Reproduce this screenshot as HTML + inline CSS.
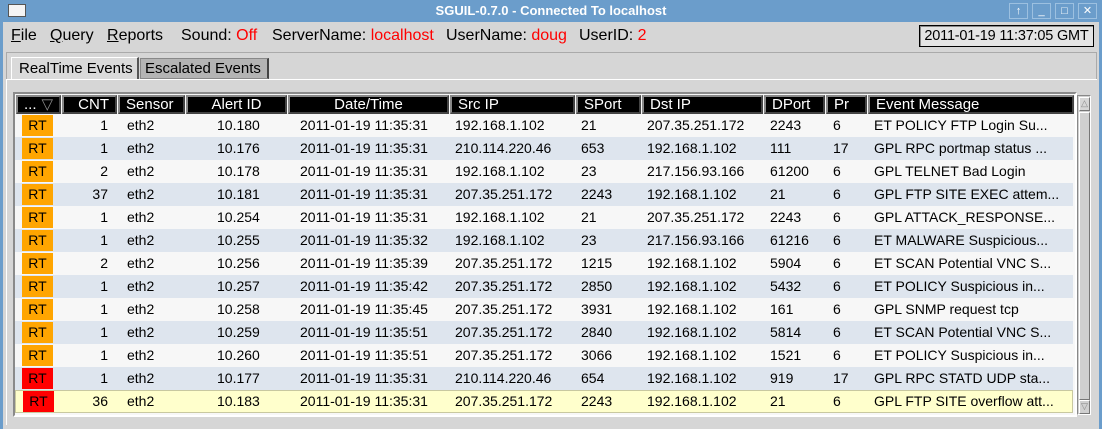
<!DOCTYPE html>
<html><head><meta charset="utf-8"><style>
*{margin:0;padding:0;box-sizing:border-box}
body{width:1102px;height:429px;background:#d6d6d6;font-family:"Liberation Sans",sans-serif;font-size:14px;color:#000;position:relative;overflow:hidden}
.a{position:absolute;white-space:nowrap}
#title{left:0;top:0;width:1102px;height:22px;background:#6b9dcb;color:#fff;font-weight:bold;font-size:13px;text-align:center;line-height:22px}
.wb{position:absolute;top:3px;width:19px;height:16px;border:1px solid #9cc0e0;background:#6b9dcb;color:#fff;font-size:11px;text-align:center;line-height:14px}
.red{color:#f00}
u{text-decoration:underline}
.m{font-size:16px;top:26px;line-height:20px}
#tbl{left:13px;top:92px;width:1064px;height:325px;background:#f7f7f7;border:2px solid;border-color:#8a8a8a #fff #fff #8a8a8a}
.hd{position:absolute;top:95px;height:19px;background:#000;color:#fff;border:2px solid;border-color:#888 #444 #444 #888;line-height:15px;padding:0 6px;font-size:15px}
.row{position:absolute;left:15px;width:1058px;height:23px}
.c{position:absolute;top:0;line-height:23px;white-space:nowrap}
.rt{position:absolute;left:7px;top:1px;width:31px;height:21px;text-align:center;line-height:21px}
</style></head><body>
<div class="a" id="title">SGUIL-0.7.0 - Connected To localhost</div>
<div class="a" style="left:8px;top:4px;width:18px;height:13px;background:#f4f4f4;border:1px solid #555"></div>
<div class="wb" style="left:1009px">↑</div><div class="wb" style="left:1032px">_</div><div class="wb" style="left:1055px">□</div><div class="wb" style="left:1078px">✕</div>
<div class="a" style="left:0;top:22px;width:3px;height:407px;background:#6b9dcb"></div>
<div class="a" style="left:1099px;top:22px;width:3px;height:407px;background:#6b9dcb"></div>
<div class="a m" style="left:11px"><u>F</u>ile</div>
<div class="a m" style="left:50px"><u>Q</u>uery</div>
<div class="a m" style="left:107px"><u>R</u>eports</div>
<div class="a m" style="left:181px">Sound: <span class="red">Off</span></div>
<div class="a m" style="left:272px">ServerName: <span class="red">localhost</span></div>
<div class="a m" style="left:446px">UserName: <span class="red">doug</span></div>
<div class="a m" style="left:579px">UserID: <span class="red">2</span></div>
<div class="a" style="left:919px;top:25px;width:175px;height:22px;border:1px solid #000;background:#e4e4e4;line-height:20px;text-align:center;box-shadow:inset 1px 1px 0 #888;font-size:14.5px;letter-spacing:-0.2px">2011-01-19 11:37:05 GMT</div>
<div class="a" style="left:6px;top:52px;width:1091px;height:28px;border:1px solid #aaa;border-bottom:none"></div>
<div class="a" style="left:11px;top:57px;width:128px;height:23px;background:#dadada;border:1px solid #fff;border-right:2px solid #555;border-bottom:none;padding-left:7px;line-height:21px;font-size:15px">RealTime Events</div>
<div class="a" style="left:140px;top:58px;width:129px;height:21px;background:#b4b4b4;border:1px solid #888;border-right:2px solid #444;padding-left:4px;line-height:19px;font-size:15px">Escalated Events</div>
<div class="a" style="left:6px;top:79px;width:1091px;height:1px;background:#fff"></div>
<div class="a" style="left:6px;top:80px;width:1px;height:345px;background:#fff"></div>
<div class="a" id="tbl"></div>
<div class="hd" style="left:16px;width:45px">... <span style="float:right;color:#888">▽</span></div>
<div class="hd" style="left:62px;width:55px;text-align:right">CNT</div>
<div class="hd" style="left:118px;width:67px">Sensor</div>
<div class="hd" style="left:186px;width:101px;text-align:center">Alert ID</div>
<div class="hd" style="left:288px;width:161px;text-align:center">Date/Time</div>
<div class="hd" style="left:450px;width:125px">Src IP</div>
<div class="hd" style="left:576px;width:65px">SPort</div>
<div class="hd" style="left:642px;width:121px">Dst IP</div>
<div class="hd" style="left:764px;width:61px">DPort</div>
<div class="hd" style="left:826px;width:41px">Pr</div>
<div class="hd" style="left:868px;width:206px">Event Message</div>
<div class="a" style="left:1077px;top:95px;width:14px;height:320px;background:#d0d0d0;border:1px solid;border-color:#888 #fff #fff #888"></div>
<div class="a" style="left:1079px;top:97px;width:11px;height:14px;background:#d6d6d6;border:1px solid;border-color:#fff #777 #777 #fff;font-size:9px;line-height:11px;text-align:center;color:#888">△</div>
<div class="a" style="left:1079px;top:112px;width:11px;height:288px;border:1px solid;border-color:#fff #777 #777 #fff"></div>
<div class="a" style="left:1079px;top:400px;width:11px;height:14px;border:1px solid;border-color:#fff #777 #777 #fff;font-size:9px;line-height:11px;text-align:center;color:#888">▽</div>

<div class="row" style="top:114px;background:#f7f7f7"><div class="rt" style="background:#ffa500">RT</div><div class="c" style="right:965px">1</div><div class="c" style="left:112px">eth2</div><div class="c" style="left:202px">10.180</div><div class="c" style="left:285px">2011-01-19 11:35:31</div><div class="c" style="left:440px">192.168.1.102</div><div class="c" style="left:566px">21</div><div class="c" style="left:632px">207.35.251.172</div><div class="c" style="left:755px">2243</div><div class="c" style="left:818px">6</div><div class="c" style="left:859px">ET POLICY FTP Login Su...</div></div>
<div class="row" style="top:137px;background:#dee5ee"><div class="rt" style="background:#ffa500">RT</div><div class="c" style="right:965px">1</div><div class="c" style="left:112px">eth2</div><div class="c" style="left:202px">10.176</div><div class="c" style="left:285px">2011-01-19 11:35:31</div><div class="c" style="left:440px">210.114.220.46</div><div class="c" style="left:566px">653</div><div class="c" style="left:632px">192.168.1.102</div><div class="c" style="left:755px">111</div><div class="c" style="left:818px">17</div><div class="c" style="left:859px">GPL RPC portmap status ...</div></div>
<div class="row" style="top:160px;background:#f7f7f7"><div class="rt" style="background:#ffa500">RT</div><div class="c" style="right:965px">2</div><div class="c" style="left:112px">eth2</div><div class="c" style="left:202px">10.178</div><div class="c" style="left:285px">2011-01-19 11:35:31</div><div class="c" style="left:440px">192.168.1.102</div><div class="c" style="left:566px">23</div><div class="c" style="left:632px">217.156.93.166</div><div class="c" style="left:755px">61200</div><div class="c" style="left:818px">6</div><div class="c" style="left:859px">GPL TELNET Bad Login</div></div>
<div class="row" style="top:183px;background:#dee5ee"><div class="rt" style="background:#ffa500">RT</div><div class="c" style="right:965px">37</div><div class="c" style="left:112px">eth2</div><div class="c" style="left:202px">10.181</div><div class="c" style="left:285px">2011-01-19 11:35:31</div><div class="c" style="left:440px">207.35.251.172</div><div class="c" style="left:566px">2243</div><div class="c" style="left:632px">192.168.1.102</div><div class="c" style="left:755px">21</div><div class="c" style="left:818px">6</div><div class="c" style="left:859px">GPL FTP SITE EXEC attem...</div></div>
<div class="row" style="top:206px;background:#f7f7f7"><div class="rt" style="background:#ffa500">RT</div><div class="c" style="right:965px">1</div><div class="c" style="left:112px">eth2</div><div class="c" style="left:202px">10.254</div><div class="c" style="left:285px">2011-01-19 11:35:31</div><div class="c" style="left:440px">192.168.1.102</div><div class="c" style="left:566px">21</div><div class="c" style="left:632px">207.35.251.172</div><div class="c" style="left:755px">2243</div><div class="c" style="left:818px">6</div><div class="c" style="left:859px">GPL ATTACK_RESPONSE...</div></div>
<div class="row" style="top:229px;background:#dee5ee"><div class="rt" style="background:#ffa500">RT</div><div class="c" style="right:965px">1</div><div class="c" style="left:112px">eth2</div><div class="c" style="left:202px">10.255</div><div class="c" style="left:285px">2011-01-19 11:35:32</div><div class="c" style="left:440px">192.168.1.102</div><div class="c" style="left:566px">23</div><div class="c" style="left:632px">217.156.93.166</div><div class="c" style="left:755px">61216</div><div class="c" style="left:818px">6</div><div class="c" style="left:859px">ET MALWARE Suspicious...</div></div>
<div class="row" style="top:252px;background:#f7f7f7"><div class="rt" style="background:#ffa500">RT</div><div class="c" style="right:965px">2</div><div class="c" style="left:112px">eth2</div><div class="c" style="left:202px">10.256</div><div class="c" style="left:285px">2011-01-19 11:35:39</div><div class="c" style="left:440px">207.35.251.172</div><div class="c" style="left:566px">1215</div><div class="c" style="left:632px">192.168.1.102</div><div class="c" style="left:755px">5904</div><div class="c" style="left:818px">6</div><div class="c" style="left:859px">ET SCAN Potential VNC S...</div></div>
<div class="row" style="top:275px;background:#dee5ee"><div class="rt" style="background:#ffa500">RT</div><div class="c" style="right:965px">1</div><div class="c" style="left:112px">eth2</div><div class="c" style="left:202px">10.257</div><div class="c" style="left:285px">2011-01-19 11:35:42</div><div class="c" style="left:440px">207.35.251.172</div><div class="c" style="left:566px">2850</div><div class="c" style="left:632px">192.168.1.102</div><div class="c" style="left:755px">5432</div><div class="c" style="left:818px">6</div><div class="c" style="left:859px">ET POLICY Suspicious in...</div></div>
<div class="row" style="top:298px;background:#f7f7f7"><div class="rt" style="background:#ffa500">RT</div><div class="c" style="right:965px">1</div><div class="c" style="left:112px">eth2</div><div class="c" style="left:202px">10.258</div><div class="c" style="left:285px">2011-01-19 11:35:45</div><div class="c" style="left:440px">207.35.251.172</div><div class="c" style="left:566px">3931</div><div class="c" style="left:632px">192.168.1.102</div><div class="c" style="left:755px">161</div><div class="c" style="left:818px">6</div><div class="c" style="left:859px">GPL SNMP request tcp</div></div>
<div class="row" style="top:321px;background:#dee5ee"><div class="rt" style="background:#ffa500">RT</div><div class="c" style="right:965px">1</div><div class="c" style="left:112px">eth2</div><div class="c" style="left:202px">10.259</div><div class="c" style="left:285px">2011-01-19 11:35:51</div><div class="c" style="left:440px">207.35.251.172</div><div class="c" style="left:566px">2840</div><div class="c" style="left:632px">192.168.1.102</div><div class="c" style="left:755px">5814</div><div class="c" style="left:818px">6</div><div class="c" style="left:859px">ET SCAN Potential VNC S...</div></div>
<div class="row" style="top:344px;background:#f7f7f7"><div class="rt" style="background:#ffa500">RT</div><div class="c" style="right:965px">1</div><div class="c" style="left:112px">eth2</div><div class="c" style="left:202px">10.260</div><div class="c" style="left:285px">2011-01-19 11:35:51</div><div class="c" style="left:440px">207.35.251.172</div><div class="c" style="left:566px">3066</div><div class="c" style="left:632px">192.168.1.102</div><div class="c" style="left:755px">1521</div><div class="c" style="left:818px">6</div><div class="c" style="left:859px">ET POLICY Suspicious in...</div></div>
<div class="row" style="top:367px;background:#dee5ee"><div class="rt" style="background:#ff0000">RT</div><div class="c" style="right:965px">1</div><div class="c" style="left:112px">eth2</div><div class="c" style="left:202px">10.177</div><div class="c" style="left:285px">2011-01-19 11:35:31</div><div class="c" style="left:440px">210.114.220.46</div><div class="c" style="left:566px">654</div><div class="c" style="left:632px">192.168.1.102</div><div class="c" style="left:755px">919</div><div class="c" style="left:818px">17</div><div class="c" style="left:859px">GPL RPC STATD UDP sta...</div></div>
<div class="row" style="top:390px;background:#ffffcc;border:1px solid #c8c8a0"><div class="rt" style="background:#ff0000;top:0">RT</div><div class="c" style="right:964px;line-height:21px">36</div><div class="c" style="left:111px;line-height:21px">eth2</div><div class="c" style="left:201px;line-height:21px">10.183</div><div class="c" style="left:284px;line-height:21px">2011-01-19 11:35:31</div><div class="c" style="left:439px;line-height:21px">207.35.251.172</div><div class="c" style="left:565px;line-height:21px">2243</div><div class="c" style="left:631px;line-height:21px">192.168.1.102</div><div class="c" style="left:754px;line-height:21px">21</div><div class="c" style="left:817px;line-height:21px">6</div><div class="c" style="left:858px;line-height:21px">GPL FTP SITE overflow att...</div></div>
</body></html>
